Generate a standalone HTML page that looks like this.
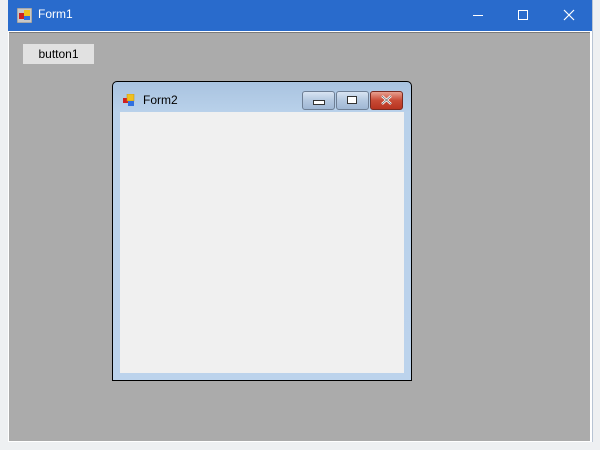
<!DOCTYPE html>
<html><head><style>
body{margin:0;width:600px;height:450px;background:#eef0f2;position:relative;overflow:hidden;font-family:"Segoe UI","Liberation Sans",sans-serif}
.win{position:absolute;left:8px;top:0;width:584px;height:442px;background:#fff;border-right:1px solid #b8c4d4}
.tb{position:absolute;left:0;top:0;width:584px;height:31px;background:#296bcc;color:#fff;font-size:12px}
.client{position:absolute;left:1px;top:32px;width:581px;height:408px;background:#ababab;border-top:1px solid #7a7a7a}
.btn1{position:absolute;left:14px;top:11px;width:71px;height:20px;background:#e1e1e1;font-size:12px;text-align:center;line-height:20px;color:#000}
.f2{position:absolute;left:112px;top:81px;width:298px;height:298px;border:1px solid #000;border-radius:5px 5px 0 0;background:linear-gradient(#a9c3e0,#b9d1ea 30px,#bcd3ec)}
.f2c{position:absolute;left:7px;top:30px;width:284px;height:261px;background:#f0f0f0}
.cb{position:absolute;top:9px;height:17px;border:1px solid #6e7f95;border-radius:3px;background:linear-gradient(#d8e4f2,#b4c8e0 50%,#9fb7d4)}
</style></head><body>
<div class="win">
<div class="tb">
<svg style="position:absolute;left:9px;top:8px" width="15" height="15"><rect x="0" y="0" width="15" height="15" fill="#c8c8c8" stroke="#888"/><rect x="2" y="5" width="5" height="6" fill="#d02020"/><rect x="7" y="2" width="6" height="6" fill="#f0c020"/><rect x="7" y="8" width="6" height="4" fill="#3070e0"/></svg>
<span style="position:absolute;left:30px;top:7px">Form1</span>
<div style="position:absolute;left:465px;top:15px;width:10px;height:1px;background:#fff"></div>
<div style="position:absolute;left:510px;top:10px;width:8px;height:8px;border:1px solid #fff"></div>
<svg style="position:absolute;left:555px;top:9px" width="12" height="12"><path d="M1 1L11 11M11 1L1 11" stroke="#fff" stroke-width="1.2"/></svg>
</div>
<div class="client"><div class="btn1">button1</div></div>
</div>
<div class="f2">
<svg style="position:absolute;left:10px;top:12px" width="13" height="13"><rect x="0" y="4" width="5" height="5" fill="#d02020"/><rect x="4" y="0" width="7" height="7" fill="#f0c020" stroke="#c09010" stroke-width=".5"/><rect x="5" y="7" width="6" height="5" fill="#3070e0"/></svg>
<span style="position:absolute;left:30px;top:11px;font-size:12px;color:#000">Form2</span>
<div class="cb" style="left:189px;width:31px"><div style="position:absolute;left:10px;top:8px;width:10px;height:3px;border:1px solid #333;background:#fff"></div></div>
<div class="cb" style="left:223px;width:31px"><div style="position:absolute;left:10px;top:4px;width:8px;height:6px;border:1px solid #333;background:#fff"></div></div>
<div class="cb" style="left:257px;width:31px;border-color:#7a2a20;background:linear-gradient(#e8a090,#c84a35 50%,#b83420)"><svg style="position:absolute;left:9px;top:3px" width="13" height="10"><path d="M2 1L11 9M11 1L2 9" stroke="#fff" stroke-width="2.4"/><path d="M2 1L11 9M11 1L2 9" stroke="#555" stroke-width=".6"/></svg></div>
<div class="f2c"></div>
</div>
</body></html>
